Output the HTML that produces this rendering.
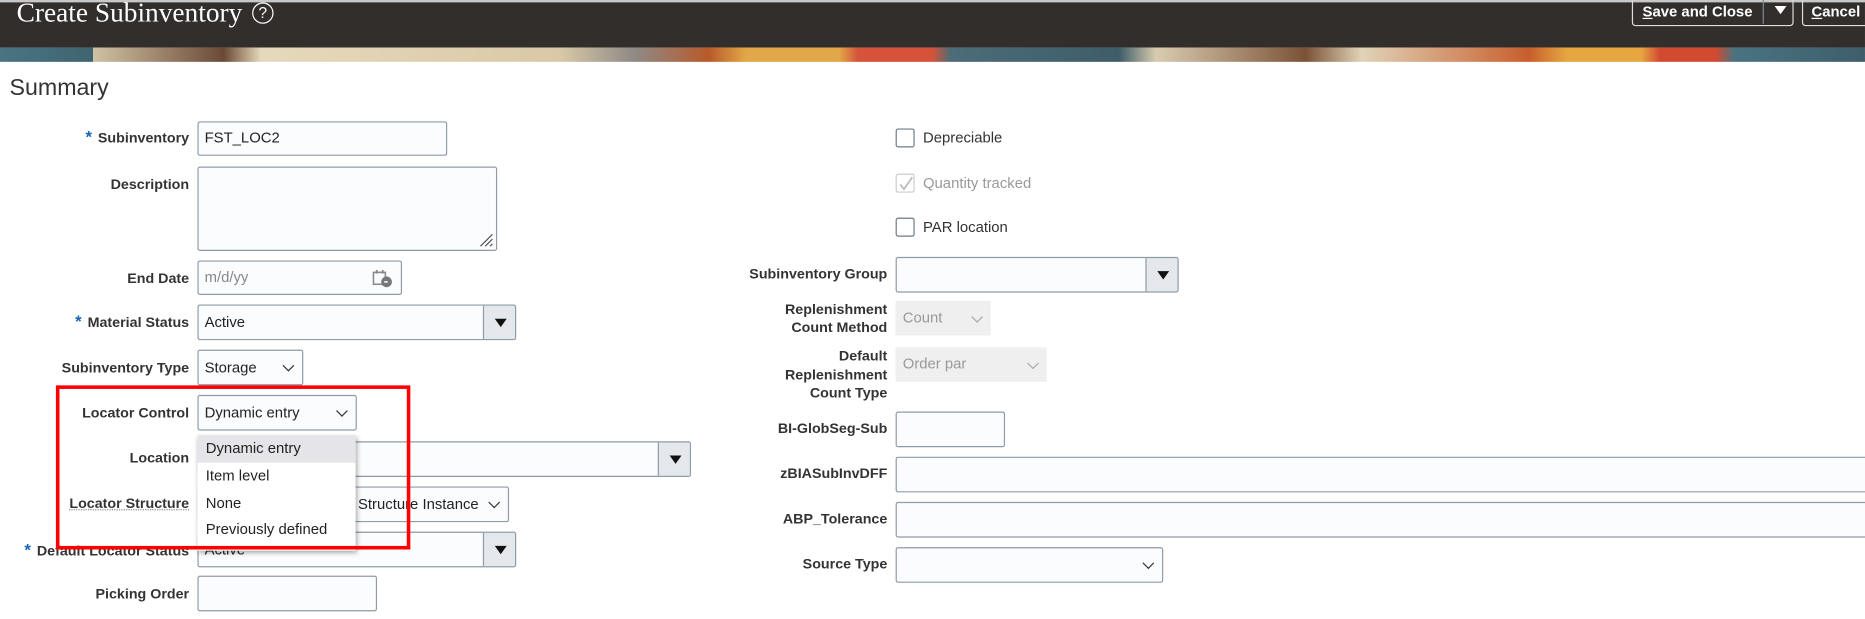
<!DOCTYPE html>
<html><head><meta charset="utf-8"><style>
html,body{margin:0;padding:0;width:1865px;height:618px;overflow:hidden;background:#fff}
#w{position:absolute;left:0;top:0;width:1568px;height:520px;transform:scale(1.1894);transform-origin:0 0;font-family:"Liberation Sans",Arial,sans-serif;color:#333}
.a{position:absolute}
.lb{position:absolute;font-size:12px;font-weight:bold;color:#333;text-align:right;white-space:nowrap}
.in{position:absolute;box-sizing:border-box;border:1px solid #8e9ba8;border-radius:2px;background:#fbfcfe;font-size:12.5px;color:#222;padding-left:5px;white-space:nowrap;overflow:hidden}
.btn{position:absolute;top:-1px;right:-1px;bottom:-1px;width:28px;box-sizing:border-box;border:1px solid #8e9ba8;border-radius:0 2px 2px 0;background:#e4e8ec}
.btn:after{content:"";position:absolute;left:9px;top:11px;border-left:5px solid transparent;border-right:5px solid transparent;border-top:7px solid #111}
.chev{position:absolute;right:8px;top:50%;margin-top:-5px;width:6px;height:6px;border-right:1.5px solid #333;border-bottom:1.5px solid #333;transform:rotate(45deg)}
.req{color:#1565b5;font-weight:bold;margin-right:5px;font-size:14px}
.cb{position:absolute;width:16px;height:16px;box-sizing:border-box;border:1px solid #6d7a86;border-radius:2px;background:#fff}
.ck{position:absolute;font-size:12.5px;color:#333}
</style></head><body><div id="w">
<div class="a" style="left:0;top:0;width:1568px;height:40px;background:#322e2b;border-top:2px solid #c8c8c8;box-sizing:border-box"></div>
<div class="a" style="left:0;top:40px;width:1568px;height:12px;background:linear-gradient(90deg,#4a7482 0%,#3f6470 5%,#cfc2a4 5%,#6b4a35 12%,#e6d9bb 14%,#d9c9a6 30%,#8e8a86 34%,#b85a2a 38%,#e2a748 40%,#e2a748 45%,#d5533a 46%,#d5533a 50%,#4b6c78 51%,#3e5d68 60%,#d9ccb0 62%,#7b5236 70%,#e0d3b7 73%,#c85e2c 82%,#e6a640 84%,#e6a640 88%,#d24a30 89%,#d24a30 92%,#497381 93%,#3e5e6a 100%)"></div>
<div class="a" style="left:14px;top:-1px;font-family:'Liberation Serif',serif;font-size:23px;color:#fff;line-height:24px">Create Subinventory</div>
<div class="a" style="left:212px;top:2px;width:16px;height:16px;border:1.5px solid #fff;border-radius:50%;color:#fff;font-size:13px;line-height:16px;text-align:center;font-family:'Liberation Sans',sans-serif">?</div>
<div class="a" style="left:1372px;top:-2px;width:136px;height:24px;border:1px solid #ddd;border-radius:0 0 3px 3px;box-sizing:border-box"></div>
<div class="a" style="left:1381px;top:3px;color:#fff;font-size:12.5px;font-weight:bold"><u>S</u>ave and Close</div>
<div class="a" style="left:1482px;top:0;width:1px;height:20px;background:#7d8a96"></div>
<div class="a" style="left:1492px;top:5px;border-left:5px solid transparent;border-right:5px solid transparent;border-top:7px solid #fff"></div>
<div class="a" style="left:1515px;top:-2px;width:60px;height:24px;border:1px solid #ddd;border-radius:0 0 3px 3px;box-sizing:border-box"></div>
<div class="a" style="left:1523px;top:3px;color:#fff;font-size:12.5px;font-weight:bold"><u>C</u>ancel</div>
<div class="a" style="left:8px;top:63px;font-size:19.5px;color:#333">Summary</div>

<div class="lb" style="right:1409px;top:107px"><span class="req">*</span>Subinventory</div>
<div class="in" style="left:166px;top:102px;width:210px;height:29px;line-height:27px">FST_LOC2</div>
<div class="lb" style="right:1409px;top:148px">Description</div>
<div class="in" style="left:166px;top:140px;width:252px;height:71px"><svg class="a" style="right:2px;bottom:2px" width="12" height="12"><path d="M11 1L1 11M11 5L5 11M11 9L9 11" stroke="#555" stroke-width="1"/></svg></div>
<div class="lb" style="right:1409px;top:227px">End Date</div>
<div class="in" style="left:166px;top:219px;width:172px;height:29px;line-height:27px;color:#888">m/d/yy<svg class="a" style="left:146px;top:6px" width="18" height="16"><rect x="1" y="3" width="10" height="10" fill="none" stroke="#888" stroke-width="1.3"/><rect x="3" y="1" width="1.5" height="3" fill="#888"/><rect x="8" y="1" width="1.5" height="3" fill="#888"/><circle cx="12" cy="11" r="4.5" fill="#777"/><path d="M10 11h3" stroke="#fff" stroke-width="1.2"/></svg></div>
<div class="lb" style="right:1409px;top:262px"><span class="req">*</span>Material Status</div>
<div class="in" style="left:166px;top:256px;width:268px;height:30px;line-height:28px">Active<div class="btn"></div></div>
<div class="lb" style="right:1409px;top:302px">Subinventory Type</div>
<div class="in" style="left:166px;top:294px;width:89px;height:30px;line-height:28px">Storage<div class="chev"></div></div>
<div class="lb" style="right:1409px;top:340px">Locator Control</div>
<div class="in" style="left:166px;top:332px;width:134px;height:30px;line-height:28px">Dynamic entry<div class="chev"></div></div>
<div class="lb" style="right:1409px;top:378px">Location</div>
<div class="in" style="left:166px;top:371px;width:415px;height:30px"><div class="btn"></div></div>
<div class="lb" style="right:1409px;top:416px;text-decoration:underline dotted #999">Locator Structure</div>
<div class="in" style="left:166px;top:409px;width:262px;height:30px;line-height:28px;padding-left:134px">Structure Instance<div class="chev"></div></div>
<div class="lb" style="right:1409px;top:454px"><span class="req">*</span>Default Locator Status</div>
<div class="in" style="left:166px;top:447px;width:268px;height:30px;line-height:28px">Active<div class="btn"></div></div>
<div class="lb" style="right:1409px;top:492px">Picking Order</div>
<div class="in" style="left:166px;top:484px;width:151px;height:30px"></div>

<div class="a" style="left:166px;top:366px;width:133px;height:97px;background:#fff;box-shadow:1px 2px 4px rgba(0,0,0,.35);font-size:12.5px;color:#222">
<div style="background:#e4e4e9;height:23px;line-height:23px;padding-left:7px">Dynamic entry</div>
<div style="height:23px;line-height:23px;padding-left:7px">Item level</div>
<div style="height:22px;line-height:22px;padding-left:7px">None</div>
<div style="height:23px;line-height:23px;padding-left:7px">Previously defined</div>
</div>
<div class="a" style="left:47px;top:324px;width:298px;height:138px;border:3px solid #f00;box-sizing:border-box"></div>

<div class="cb" style="left:753px;top:108px"></div><div class="ck" style="left:776px;top:109px">Depreciable</div>
<div class="cb" style="left:753px;top:146px;border-color:#ccc"><svg class="a" style="left:1px;top:1px" width="13" height="13"><path d="M2 7l3 4 7-10" fill="none" stroke="#bbb" stroke-width="1.5"/></svg></div><div class="ck" style="left:776px;top:147px;color:#999">Quantity tracked</div>
<div class="cb" style="left:753px;top:183px"></div><div class="ck" style="left:776px;top:184px">PAR location</div>

<div class="lb" style="right:822px;top:223px">Subinventory Group</div>
<div class="in" style="left:753px;top:216px;width:238px;height:30px"><div class="btn"></div></div>
<div class="lb" style="right:822px;top:253px;line-height:15px">Replenishment<br>Count Method</div>
<div class="a" style="left:753px;top:253px;width:80px;height:29px;background:#efefef;font-size:12.5px;color:#999;line-height:29px;padding-left:6px;box-sizing:border-box">Count<div class="chev" style="border-color:#aaa"></div></div>
<div class="lb" style="right:822px;top:292px;line-height:15.5px">Default<br>Replenishment<br>Count Type</div>
<div class="a" style="left:753px;top:292px;width:127px;height:29px;background:#efefef;font-size:12.5px;color:#999;line-height:29px;padding-left:6px;box-sizing:border-box">Order par<div class="chev" style="border-color:#aaa"></div></div>
<div class="lb" style="right:822px;top:353px">BI-GlobSeg-Sub</div>
<div class="in" style="left:753px;top:346px;width:92px;height:30px"></div>
<div class="lb" style="right:822px;top:391px">zBIASubInvDFF</div>
<div class="in" style="left:753px;top:384px;width:830px;height:30px"></div>
<div class="lb" style="right:822px;top:429px">ABP_Tolerance</div>
<div class="in" style="left:753px;top:422px;width:830px;height:30px"></div>
<div class="lb" style="right:822px;top:467px">Source Type</div>
<div class="in" style="left:753px;top:460px;width:225px;height:30px"><div class="chev"></div></div>
</div></body></html>
